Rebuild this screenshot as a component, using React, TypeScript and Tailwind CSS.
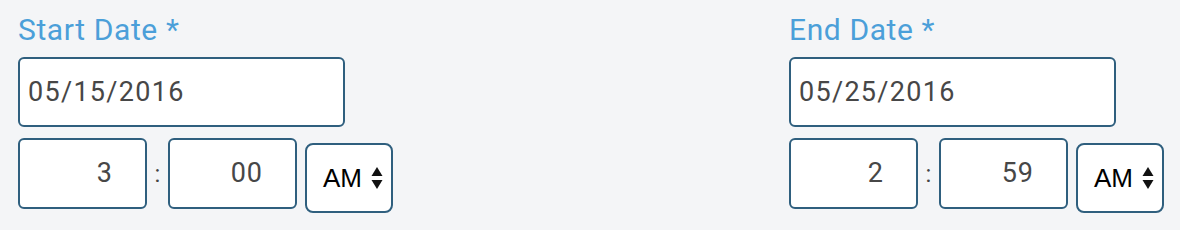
import React from "react";

function Updown() {
  return (
    <svg width="12" height="22" viewBox="0 0 12 22" className="ml-[9px]" aria-hidden>
      <path d="M6 0 L11.5 9 L0.5 9 Z" fill="#111" />
      <path d="M0.5 13 L11.5 13 L6 22 Z" fill="#111" />
    </svg>
  );
}

function DateField({ label, date, hour, minute }: { label: string; date: string; hour: string; minute: string }) {
  return (
    <div className="flex w-[771px] shrink-0 flex-col">
      <div className="mt-[13px] text-[30px] leading-[34px] tracking-[0.6px] text-[#4b9fd9]">
        {label} <span>*</span>
      </div>
      <div className="mt-[10px] flex h-[70px] w-[327px] items-center rounded-[6px] border-2 border-[#2f5f7e] bg-white pl-[8px] text-[27px] tracking-[1.3px] text-[#474747]">
        {date}
      </div>
      <div className="mt-[11px] flex items-start">
        <div className="flex h-[71px] w-[129px] items-center justify-end rounded-[6px] border-2 border-[#2f5f7e] bg-white pr-[32px] text-[27px] tracking-[1px] text-[#474747]">
          {hour}
        </div>
        <div className="flex h-[71px] w-[21px] items-center justify-center text-[24px] text-[#444]">:</div>
        <div className="flex h-[71px] w-[129px] items-center justify-end rounded-[6px] border-2 border-[#2f5f7e] bg-white pr-[32px] text-[27px] tracking-[1px] text-[#474747]">
          {minute}
        </div>
        <div className="ml-[8px] mt-[5px] flex h-[70px] w-[88px] items-center rounded-[8px] border-2 border-[#2f5f7e] bg-white pl-[16px] font-['Liberation_Sans',Arial,sans-serif] text-[26px] text-black">
          AM
          <Updown />
        </div>
      </div>
    </div>
  );
}

export default function App() {
  return (
    <div className="h-[230px] w-[1180px] overflow-hidden bg-[#f4f5f7] pl-[18px] font-['Roboto','Liberation_Sans',sans-serif]">
      <div className="flex">
        <DateField label="Start Date" date="05/15/2016" hour="3" minute="00" />
        <DateField label="End Date" date="05/25/2016" hour="2" minute="59" />
      </div>
    </div>
  );
}
